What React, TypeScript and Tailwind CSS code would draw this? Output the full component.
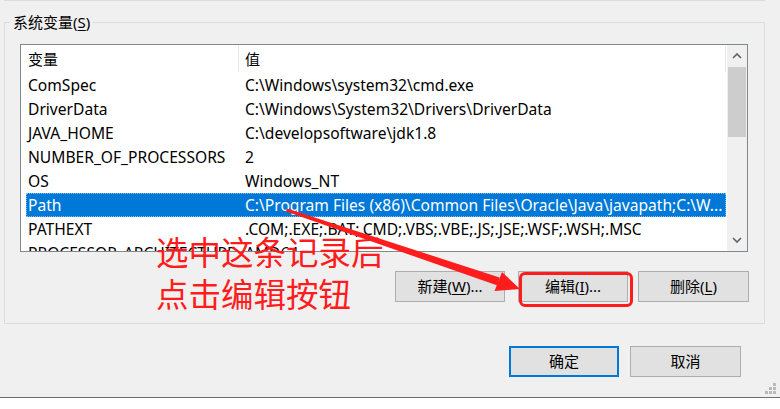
import React from "react";

const rows: { name: string; value: string; selected?: boolean }[] = [
  { name: "ComSpec", value: "C:\\Windows\\system32\\cmd.exe" },
  { name: "DriverData", value: "C:\\Windows\\System32\\Drivers\\DriverData" },
  { name: "JAVA_HOME", value: "C:\\developsoftware\\jdk1.8" },
  { name: "NUMBER_OF_PROCESSORS", value: "2" },
  { name: "OS", value: "Windows_NT" },
  {
    name: "Path",
    value: "C:\\Program Files (x86)\\Common Files\\Oracle\\Java\\javapath;C:\\W...",
    selected: true,
  },
  { name: "PATHEXT", value: ".COM;.EXE;.BAT;.CMD;.VBS;.VBE;.JS;.JSE;.WSF;.WSH;.MSC" },
  { name: "PROCESSOR_ARCHITECTURE", value: "AMD64" },
];

function Chevron({ up }: { up?: boolean }) {
  return (
    <svg width="10" height="6" viewBox="0 0 10 6">
      <path
        d={up ? "M1 5 L5 1 L9 5" : "M1 1 L5 5 L9 1"}
        fill="none"
        stroke="#606060"
        strokeWidth="1.6"
      />
    </svg>
  );
}

function Btn({
  children,
  w,
  primary,
}: {
  children: React.ReactNode;
  w: string;
  primary?: boolean;
}) {
  return (
    <div
      className={
        "h-[31px] flex items-center justify-center bg-[#e1e1e1] text-[15px] text-black " +
        w +
        (primary ? " border-2 border-[#0078d7]" : " border border-[#adadad]")
      }
    >
      {children}
    </div>
  );
}

export default function App() {
  return (
    <div className="relative w-[780px] h-[409px] overflow-hidden bg-[#f0f0f0] flex flex-col font-['Noto_Sans','Noto_Sans_CJK_SC',sans-serif] text-black">
      <div className="h-px w-[761px] ml-[4px] bg-[#dcdcdc]" />

      <fieldset className="mt-[11px] ml-[4px] w-[761px] border border-[#dcdcdc] px-0 pt-0 pb-[21px] m-0">
        <legend className="ml-[5px] px-[3px] text-[15px] leading-[20px]">
          系统变量(<span className="underline underline-offset-2">S</span>)
        </legend>

        <div className="mt-[12px] ml-[15px] w-[728px] h-[208px] border border-[#828790] bg-white flex overflow-hidden">
          <div className="w-[706px] flex flex-col">
            <div className="h-[28px] flex items-center text-[15px] shrink-0">
              <div className="w-[217px] pl-[7px]">变量</div>
              <div className="w-px h-[26px] bg-[#e5e5e5]" />
              <div className="w-[486px] pl-[6px]">值</div>
              <div className="w-px h-[26px] bg-[#e5e5e5]" />
            </div>
            {rows.map((r) => (
              <div
                key={r.name}
                className={
                  "ml-[5px] w-[700px] h-[24px] shrink-0 flex items-center text-[15.6px] leading-[24px] whitespace-nowrap " +
                  (r.selected
                    ? "bg-[#0078d7] text-white outline-1 outline-dotted outline-[#7fbcee] -outline-offset-1"
                    : "")
                }
              >
                <div className="w-[219px] pl-[2px] pr-[6px] overflow-hidden text-ellipsis">
                  {r.name}
                </div>
                <div className="flex-1 overflow-hidden">{r.value}</div>
              </div>
            ))}
          </div>
          <div className="w-[20px] bg-[#f0f0f0] flex flex-col">
            <div className="h-[22px] flex items-center justify-center">
              <Chevron up />
            </div>
            <div className="h-[70px] mx-[1px] bg-[#cdcdcd]" />
            <div className="flex-1" />
            <div className="h-[22px] flex items-center justify-center">
              <Chevron />
            </div>
          </div>
        </div>

        <div className="mt-[19px] flex justify-end pr-[15px]">
          <Btn w="w-[110px]">
            新建(<span className="underline underline-offset-2">W</span>)...
          </Btn>
          <div className="w-[13px]" />
          <Btn w="w-[110px]">
            编辑(<span className="underline underline-offset-2">I</span>)...
          </Btn>
          <div className="w-[10px]" />
          <Btn w="w-[111px]">
            删除(<span className="underline underline-offset-2">L</span>)
          </Btn>
        </div>
      </fieldset>

      <div className="mt-[22px] flex justify-end pr-[39px]">
        <Btn w="w-[110px]" primary>
          确定
        </Btn>
        <div className="w-[11px]" />
        <Btn w="w-[111px]">取消</Btn>
      </div>

      <div className="h-[20px] flex justify-end items-end pr-[3px] pb-[2px]">
        <svg width="12" height="12" viewBox="0 0 12 12">
          <rect x="8" y="0" width="3" height="3" fill="#b9b9b9" />
          <rect x="4" y="4" width="3" height="3" fill="#b9b9b9" />
          <rect x="8" y="4" width="3" height="3" fill="#b9b9b9" />
          <rect x="0" y="8" width="3" height="3" fill="#b9b9b9" />
          <rect x="4" y="8" width="3" height="3" fill="#b9b9b9" />
          <rect x="8" y="8" width="3" height="3" fill="#b9b9b9" />
        </svg>
      </div>

      <div className="flex-1 bg-white border-t border-[#6e6e6e]" />

      {/* annotation overlay */}
      <div className="absolute left-[156px] top-[230px] text-[32.5px] leading-[42px] text-[#ff1c1c] font-['Noto_Sans_CJK_SC',sans-serif]">
        <div>选中这条记录后</div>
        <div>点击编辑按钮</div>
      </div>

      <div className="absolute left-[519px] top-[272px] w-[114px] h-[35px] rounded-[6px] border-[3px] border-[#ff1c1c]" />

      <svg
        className="absolute left-0 top-0"
        width="780"
        height="409"
        viewBox="0 0 780 409"
      >
        <polygon
          points="287,208.5 499.5,277.5 497.5,285.5 286,211.5"
          fill="#ff1c1c"
        />
        <polygon points="520,289 494.5,291 502,272" fill="#ff1c1c" />
      </svg>
    </div>
  );
}
